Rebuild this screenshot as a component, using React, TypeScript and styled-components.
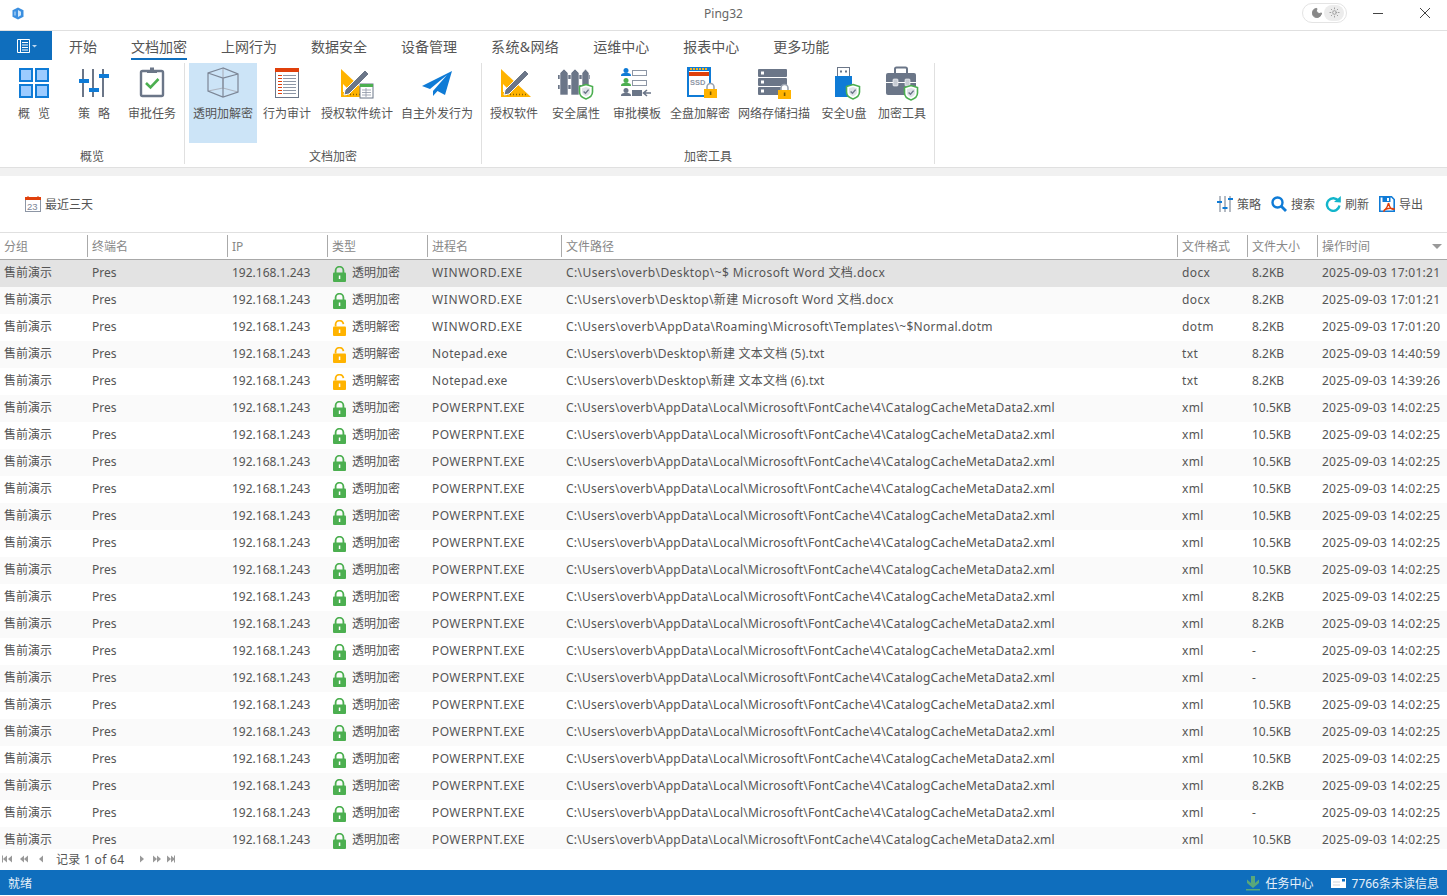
import type { ReactNode } from 'react';
import { Moon, Sun } from 'lucide-react';
import styled, { createGlobalStyle } from 'styled-components';

const BLUE = '#0f6ebd';
const ICON_BLUE = '#0f7bd6';
const SLATE = '#6b7688';
const GREEN = '#4caf50';
const AMBER = '#ffb300';
const RED = '#e0400b';
const COLUMNS = '87px 140px 100px 100px 134px 616px 70px 70px 1fr';

const GlobalStyle = createGlobalStyle`
  html, body {
    margin: 0;
    background: #fff;
  }
  body {
    font-family: "Noto Sans", "Noto Sans CJK SC", sans-serif;
    font-size: 12px;
    color: #555;
  }
`;

const Shield = ({ x, y }: { x: number; y: number }) => (
  <g transform={`translate(${x} ${y})`}>
    <path d="M7 0.5 L13.5 2.5 V8 C13.5 11.5 10.5 13.8 7 15 C3.5 13.8 .5 11.5 .5 8 V2.5 Z" fill="#fff" stroke={GREEN} strokeWidth="1.6" />
    <path d="M7 3 L11 4.2 V8 C11 10 9.2 11.5 7 12.4 C4.8 11.5 3 10 3 8 V4.2 Z" fill="#dfe3e8" />
    <path d="M4.6 7.4 L6.5 9.3 L9.6 5.6" fill="none" stroke={SLATE} strokeWidth="1.4" />
  </g>
);

const Padlock = ({ x, y }: { x: number; y: number }) => (
  <g transform={`translate(${x} ${y})`}>
    <path d="M3 7 V5 A3.5 3.5 0 0 1 10 5 V7" fill="#fff" stroke="#9aa3b0" strokeWidth="1.6" />
    <rect x="0" y="7" width="13" height="9" fill={AMBER} />
    <rect x="5.8" y="9.5" width="1.6" height="3.5" fill="#7a5a00" />
  </g>
);

const TrianglePencil = ({ x }: { x: number }) => (
  <g transform={`translate(${x} 0)`}>
    <path d="M5 4 L35 32 H5 Z" fill={AMBER} />
    <path d="M8 29.5 H30" stroke="#8a6400" strokeWidth="1.4" strokeDasharray="1 2" />
    <path d="M7 19 V27 H15 Z" fill="#fff" />
    <path d="M9 25 L29 5 L33 9 L13 29 L8 30 Z" fill={SLATE} stroke="#fff" strokeWidth="1" />
  </g>
);

const Overview = () => (
  <>
    {[4, 20].map(y =>
      [4, 20].map(x => <rect key={`${x}-${y}`} x={x} y={y} width="12" height="12" fill="#9ccbff" stroke={ICON_BLUE} strokeWidth="2" />),
    )}
  </>
);

const Sliders = () => (
  <>
    <path d="M7 4 V32 M17 4 V32 M27 4 V32" stroke={SLATE} strokeWidth="2" />
    <rect x="3" y="14" width="10" height="4" fill={ICON_BLUE} />
    <rect x="13" y="23" width="10" height="4" fill={ICON_BLUE} />
    <rect x="23" y="9" width="10" height="4" fill={ICON_BLUE} />
  </>
);

const Clipboard = () => (
  <>
    <rect x="7" y="6" width="22" height="25" rx="1.5" fill="#fff" stroke={SLATE} strokeWidth="2.4" />
    <path d="M13 8 V5 H16 V2.5 H20 V5 H23 V8 Z" fill={SLATE} />
    <path d="M12 18 L16.5 22.5 L24.5 14" fill="none" stroke={GREEN} strokeWidth="2.6" />
  </>
);

const Cube = () => (
  <g fill="none" strokeWidth="1.2">
    <path d="M18 3 V23 M3 26 L18 23 L33 27" stroke="#aeb5c0" />
    <path d="M18 3 L3 8 V26 L18 32 L33 27 V9 Z M3 8 L18 13 L33 9 M18 13 V32" stroke="#7c8696" />
  </g>
);

const AuditLog = () => (
  <>
    <rect x="6.5" y="3.5" width="23" height="29" fill="#fff" stroke={SLATE} />
    <rect x="6" y="3" width="24" height="4" fill={RED} />
    {[10, 13, 16, 19, 22, 25, 28].map(y => (
      <g key={y}>
        <rect x="9" y={y} width="4" height="1" fill={RED} />
        <rect x="14" y={y} width="13" height="1" fill="#8d96a5" />
      </g>
    ))}
  </>
);

const LicenseStats = () => (
  <>
    <TrianglePencil x={-3} />
    <rect x="21" y="19" width="13" height="14" fill="#fff" stroke={SLATE} />
    <rect x="21" y="19" width="13" height="3" fill={GREEN} />
    <path d="M23 25 H32 M23 27.5 H32 M23 30 H32 M27 23 V32" stroke="#8d96a5" strokeWidth=".8" />
  </>
);

const Plane = () => <path d="M33 6 L3 21 L11 24 L28 10 L14 26 V31 L18.5 26 L26 30 Z" fill={ICON_BLUE} />;

const Fence = () => (
  <>
    <path d="M0 10 H32 V14 H0 Z M0 20 H32 V24 H0 Z" fill={SLATE} />
    <path d="M2 8 L6 4 L10 8 V30 H2 Z M13 8 L17 4 L21 8 V30 H13 Z M24 8 L27.5 4 L31 8 V30 H24 Z" fill={SLATE} stroke="#fff" strokeWidth=".6" />
    <Shield x={21} y={19} />
  </>
);

const Approver = ({ y, color }: { y: number; color: string }) => (
  <>
    <circle cx="7" cy={y + 2.5} r="2.5" fill={color} />
    <path d={`M2 ${y + 8} C2 ${y + 5} 4 ${y + 5} 7 ${y + 5} C10 ${y + 5} 12 ${y + 5} 12 ${y + 8} Z`} fill={color} />
  </>
);

const Template = () => (
  <>
    <Approver y={3} color={ICON_BLUE} />
    <Approver y={13} color={GREEN} />
    <Approver y={23} color={SLATE} />
    <rect x="13.5" y="5.5" width="14" height="5" fill="#fff" stroke="#8d96a5" />
    <rect x="13.5" y="15.5" width="14" height="5" fill="#fff" stroke="#8d96a5" />
    <rect x="13" y="25" width="10" height="6" fill={SLATE} />
    <path d="M32 28 H24.5 M28 25 L24.5 28 L28 31" fill="none" stroke={SLATE} strokeWidth="1.6" />
  </>
);

const Ssd = () => (
  <>
    <rect x="5" y="2" width="24" height="30" fill={ICON_BLUE} />
    <rect x="7" y="6" width="20" height="24" fill="#fff" />
    <path d="M8 4 H26" stroke="#f5b51e" strokeWidth="2" strokeDasharray="2 1" />
    <rect x="7" y="7" width="20" height="4" fill={RED} />
    <text x="8" y="20" fontSize="7.5" fontWeight="700" fill="#8d96a5" fontFamily="'Liberation Sans', sans-serif">
      SSD
    </text>
    <Padlock x={22} y={17} />
  </>
);

const ServerRack = () => (
  <>
    {[4, 13, 22].map(y => (
      <g key={y}>
        <rect x="2" y={y} width="29" height="8" rx="1" fill={SLATE} />
        <rect x="5" y={y + 2.5} width="3" height="3" fill="#fff" />
      </g>
    ))}
    <Padlock x={22} y={18} />
  </>
);

const UsbDisk = () => (
  <>
    <rect x="11.5" y="2.5" width="12" height="9" fill="#fff" stroke={SLATE} />
    <path d="M14 5.5 H16 V7.5 H14 Z M19 5.5 H21 V7.5 H19 Z" fill={SLATE} />
    <rect x="9" y="11" width="17" height="21" fill={ICON_BLUE} />
    <Shield x={20} y={19} />
  </>
);

const Toolbox = () => (
  <>
    <path d="M11 8 V4 A1.5 1.5 0 0 1 12.5 2.5 H21.5 A1.5 1.5 0 0 1 23 4 V8" fill="none" stroke={SLATE} strokeWidth="2" />
    <rect x="2" y="8" width="30" height="22" rx="2" fill={SLATE} />
    <path d="M2 17.5 H32" stroke="#fff" />
    <rect x="9" y="14" width="5" height="7" rx="1" fill="#c7ccd4" stroke="#fff" strokeWidth=".6" />
    <rect x="21" y="14" width="5" height="7" rx="1" fill="#c7ccd4" stroke="#fff" strokeWidth=".6" />
    <Shield x={20} y={20} />
  </>
);

const SmallSliders = () => (
  <svg width="16" height="16" viewBox="0 0 16 16">
    <path d="M3 0 V16 M8 0 V16 M13 0 V16" stroke={SLATE} />
    <rect x="0" y="5" width="5" height="2" fill={ICON_BLUE} />
    <rect x="5.5" y="11" width="5" height="2" fill={ICON_BLUE} />
    <rect x="11" y="2" width="5" height="2" fill={ICON_BLUE} />
  </svg>
);

const SmallSearch = () => (
  <svg width="16" height="16" viewBox="0 0 16 16">
    <circle cx="6.5" cy="6.5" r="5" fill="none" stroke={ICON_BLUE} strokeWidth="2.4" />
    <path d="M10 10 L15 15" stroke={ICON_BLUE} strokeWidth="2.8" />
  </svg>
);

const SmallRefresh = () => (
  <svg width="16" height="16" viewBox="0 0 16 16">
    <path d="M13.5 5 A6.3 6.3 0 1 0 14.5 9.5" fill="none" stroke="#12b5cb" strokeWidth="2.4" />
    <path d="M9 6 L15.8 6.4 L15.8 0 Z" fill="#12b5cb" />
  </svg>
);

const SmallExport = () => (
  <svg width="16" height="16" viewBox="0 0 16 16">
    <path d="M.8 .8 H12.5 L15.2 3.5 V15.2 H.8 Z" fill="#fff" stroke={ICON_BLUE} strokeWidth="1.6" />
    <rect x="3.5" y="1" width="8" height="5" fill={ICON_BLUE} />
    <rect x="8" y="2" width="2" height="3" fill="#fff" />
    <path d="M9.5 7 C9 10 7 13 5 15 C5 13 10 11.5 15 13 C12 14 10.5 11 9.5 7 Z" fill="none" stroke={RED} strokeWidth="1.5" />
  </svg>
);

const SmallCalendar = () => (
  <svg width="16" height="16" viewBox="0 0 16 16">
    <rect x=".5" y="1.5" width="15" height="14" fill="#fff" stroke="#8d96a5" />
    <rect x="0" y="1" width="16" height="3" fill={RED} />
    <path d="M3 0 V2 M13 0 V2" stroke={RED} />
    <text x="2" y="14" fontSize="9.5" fill="#7c8696" fontFamily="'Liberation Sans', sans-serif">
      23
    </text>
  </svg>
);

const Lock = ({ open }: { open?: boolean }) => {
  const color = open ? AMBER : GREEN;
  return (
    <svg width="13" height="16" viewBox="0 0 13 16">
      <path d={open ? 'M2.6 6.5 V5 A3.9 3.9 0 0 1 10.4 4.2' : 'M2.6 7 V4.6 A3.9 3.9 0 0 1 10.4 4.6 V7'} fill="none" stroke={color} strokeWidth="1.8" />
      <rect x="0" y="6.5" width="13" height="9.5" rx="1" fill={color} />
      <rect x="5.8" y="9.5" width="1.5" height="3.5" fill="#fff" />
    </svg>
  );
};

interface RibbonEntry {
  label: string;
  width: number;
  icon: ReactNode;
  active?: boolean;
}

interface RibbonGroupData {
  title: string;
  width: number;
  inset: number;
  items: RibbonEntry[];
}

const ribbonGroups: RibbonGroupData[] = [
  {
    title: '概览',
    width: 185,
    inset: 4,
    items: [
      { label: '概 览', width: 60, icon: <Overview /> },
      { label: '策 略', width: 60, icon: <Sliders /> },
      { label: '审批任务', width: 56, icon: <Clipboard /> },
    ],
  },
  {
    title: '文档加密',
    width: 297,
    inset: 4,
    items: [
      { label: '透明加解密', width: 68, icon: <Cube />, active: true },
      { label: '行为审计', width: 60, icon: <AuditLog /> },
      { label: '授权软件统计', width: 80, icon: <LicenseStats /> },
      { label: '自主外发行为', width: 80, icon: <Plane /> },
    ],
  },
  {
    title: '加密工具',
    width: 453,
    inset: 1,
    items: [
      { label: '授权软件', width: 62, icon: <TrianglePencil x={0} /> },
      { label: '安全属性', width: 62, icon: <Fence /> },
      { label: '审批模板', width: 60, icon: <Template /> },
      { label: '全盘加解密', width: 66, icon: <Ssd /> },
      { label: '网络存储扫描', width: 82, icon: <ServerRack /> },
      { label: '安全U盘', width: 58, icon: <UsbDisk /> },
      { label: '加密工具', width: 58, icon: <Toolbox /> },
    ],
  },
];

const tabs = ['开始', '文档加密', '上网行为', '数据安全', '设备管理', '系统&网络', '运维中心', '报表中心', '更多功能'];
const headers = ['分组', '终端名', 'IP', '类型', '进程名', '文件路径', '文件格式', '文件大小', '操作时间'];

interface LogRow {
  decrypt?: boolean;
  process: string;
  processTrack: number;
  path: string;
  pathTrack: number;
  ext: string;
  size: string;
  time: string;
}

const FONT_CACHE_PATH = 'C:\\Users\\overb\\AppData\\Local\\Microsoft\\FontCache\\4\\CatalogCacheMetaData2.xml';
const pptSizes = ['10.5KB', '10.5KB', '10.5KB', '10.5KB', '10.5KB', '10.5KB', '10.5KB', '8.2KB', '8.2KB', '-', '-', '10.5KB', '10.5KB', '10.5KB', '8.2KB', '-', '10.5KB'];

const rows: LogRow[] = [
  { process: 'WINWORD.EXE', processTrack: 0.6, path: 'C:\\Users\\overb\\Desktop\\~$ Microsoft Word 文档.docx', pathTrack: 0.4, ext: 'docx', size: '8.2KB', time: '2025-09-03 17:01:21' },
  { process: 'WINWORD.EXE', processTrack: 0.6, path: 'C:\\Users\\overb\\Desktop\\新建 Microsoft Word 文档.docx', pathTrack: 0.36, ext: 'docx', size: '8.2KB', time: '2025-09-03 17:01:21' },
  { decrypt: true, process: 'WINWORD.EXE', processTrack: 0.6, path: 'C:\\Users\\overb\\AppData\\Roaming\\Microsoft\\Templates\\~$Normal.dotm', pathTrack: 0.32, ext: 'dotm', size: '8.2KB', time: '2025-09-03 17:01:20' },
  { decrypt: true, process: 'Notepad.exe', processTrack: 0.38, path: 'C:\\Users\\overb\\Desktop\\新建 文本文档 (5).txt', pathTrack: 0.225, ext: 'txt', size: '8.2KB', time: '2025-09-03 14:40:59' },
  { decrypt: true, process: 'Notepad.exe', processTrack: 0.38, path: 'C:\\Users\\overb\\Desktop\\新建 文本文档 (6).txt', pathTrack: 0.225, ext: 'txt', size: '8.2KB', time: '2025-09-03 14:39:26' },
  ...pptSizes.map(size => ({ process: 'POWERPNT.EXE', processTrack: 0.42, path: FONT_CACHE_PATH, pathTrack: 0.225, ext: 'xml', size, time: '2025-09-03 14:02:25' })),
];

const Pager = ({ marks, dir }: { marks: number[]; dir: 'left' | 'right' }) => (
  <svg width="11" height="8" viewBox="0 0 11 8">
    {marks.map(x =>
      x < 0 ? (
        <rect key={x} x={-x - 1} y="0.5" width="1" height="7" fill="#999" />
      ) : (
        <path key={x} d={dir === 'left' ? `M${x + 4} 0.5 V7.5 L${x} 4 Z` : `M${x} 0.5 V7.5 L${x + 4} 4 Z`} fill="#999" />
      ),
    )}
  </svg>
);

const App = () => (
  <Page>
    <GlobalStyle />
    <TitleBar>
      <AppLogo viewBox="0 0 12 13" width="12" height="13">
        <path d="M6 .5 L11.5 3.3 V9.7 L6 12.5 L.5 9.7 V3.3 Z" fill="#3b8fe0" />
        <path d="M6 3 L9 4.7 V8.3 L6 10 Z" fill="#cfe6fb" />
        <path d="M3 4.5 V8.5" stroke="#cfe6fb" />
      </AppLogo>
      <AppTitle>Ping32</AppTitle>
      <ThemeToggle>
        <Moon size={12} fill="#888" color="#888" />
        <SunBubble>
          <Sun size={11} color="#999" />
        </SunBubble>
      </ThemeToggle>
      <WindowButton viewBox="0 0 10 10">
        <path d="M0 5.5 H10" stroke="#444" />
      </WindowButton>
      <CloseButton viewBox="0 0 10 10">
        <path d="M0 0 L10 10 M10 0 L0 10" stroke="#444" />
      </CloseButton>
    </TitleBar>

    <TabBar>
      <FileButton>
        <svg width="20" height="14" viewBox="0 0 20 14">
          <path d="M.5 .5 H12.5 V13.5 H.5 Z M3.5 .5 V13.5 M5 3.5 H11 M5 6 H11 M5 8.5 H11 M5 11 H11" fill="none" stroke="#fff" />
          <path d="M15 6 H20 L17.5 8.5 Z" fill="#bcd7ef" />
        </svg>
      </FileButton>
      <TabList>
        {tabs.map(tab => (
          <Tab key={tab} $active={tab === '文档加密'} $tracked={tab.includes('&')}>
            {tab}
          </Tab>
        ))}
      </TabList>
    </TabBar>

    <Ribbon>
      {ribbonGroups.map(group => (
        <RibbonGroup key={group.title} $width={group.width}>
          <RibbonItems $inset={group.inset}>
            {group.items.map(item => (
              <RibbonItem key={item.label} $width={item.width} $active={item.active}>
                <svg width="36" height="36" viewBox="0 0 36 36">
                  {item.icon}
                </svg>
                <RibbonLabel>{item.label}</RibbonLabel>
              </RibbonItem>
            ))}
          </RibbonItems>
          <GroupTitle>{group.title}</GroupTitle>
        </RibbonGroup>
      ))}
    </Ribbon>
    <Strip />

    <Toolbar>
      <ToolAction>
        <SmallCalendar />
        最近三天
      </ToolAction>
      <ToolActions>
        <ToolAction>
          <SmallSliders />
          策略
        </ToolAction>
        <ToolAction>
          <SmallSearch />
          搜索
        </ToolAction>
        <ToolAction>
          <SmallRefresh />
          刷新
        </ToolAction>
        <ToolAction>
          <SmallExport />
          导出
        </ToolAction>
      </ToolActions>
    </Toolbar>

    <HeaderRow>
      {headers.map((header, index) => (
        <HeaderCell key={header} $first={index === 0}>
          {header}
        </HeaderCell>
      ))}
      <SortCaret />
    </HeaderRow>

    <TableBody>
      {rows.map((row, index) => (
        <Row key={index} $selected={index === 0} $odd={index % 2 === 1}>
          <Cell $first>售前演示</Cell>
          <Cell>Pres</Cell>
          <Cell>192.168.1.243</Cell>
          <TypeCell>
            <Lock open={row.decrypt} />
            <TypeLabel>{row.decrypt ? '透明解密' : '透明加密'}</TypeLabel>
          </TypeCell>
          <Cell $track={row.processTrack}>{row.process}</Cell>
          <Cell $track={row.pathTrack}>{row.path}</Cell>
          <Cell $track={0.4}>{row.ext}</Cell>
          <Cell>{row.size}</Cell>
          <Cell $track={0.26}>{row.time}</Cell>
        </Row>
      ))}
    </TableBody>

    <PagerBar>
      <PagerGroup $gap={6}>
        <Pager dir="left" marks={[-1, 1, 6]} />
        <Pager dir="left" marks={[1, 5]} />
        <Pager dir="left" marks={[3]} />
      </PagerGroup>
      <PagerText>记录 1 of 64</PagerText>
      <PagerGroup $gap={3}>
        <Pager dir="right" marks={[4]} />
        <Pager dir="right" marks={[3, 7]} />
        <Pager dir="right" marks={[3, 7, -11]} />
      </PagerGroup>
    </PagerBar>

    <StatusBar>
      就绪
      <StatusRight>
        <StatusItem>
          <svg width="16" height="16" viewBox="0 0 16 16">
            <path d="M6 1 H10 V8 L14 4.5 V8 L8 13 L2 8 V4.5 L6 8 Z M1 14 H15 V15.5 H1 Z" fill="#5aa77a" />
          </svg>
          任务中心
        </StatusItem>
        <StatusItem $gap={6}>
          <svg width="15" height="12" viewBox="0 0 15 12">
            <rect x="0" y="1" width="15" height="10" fill="#fff" />
            <rect x="11" y="2" width="3" height="2.5" fill={BLUE} />
            <path d="M2 5 H9 M2 8 H9" stroke="#cfd4da" />
          </svg>
          7766条未读信息
        </StatusItem>
      </StatusRight>
    </StatusBar>
  </Page>
);

export default App;

const Page = styled.div`
  display: flex;
  flex-direction: column;
  box-sizing: border-box;
  width: 1447px;
  height: 896px;
  padding-bottom: 1px;
  overflow: hidden;
  background: #fff;
`;

const TitleBar = styled.header`
  position: relative;
  display: flex;
  flex: none;
  align-items: center;
  box-sizing: border-box;
  height: 31px;
  padding-left: 12px;
  border-bottom: 1px solid #e0e0e0;
`;

const AppLogo = styled.svg`
  flex: none;
  margin-top: -4px;
`;

const AppTitle = styled.span`
  position: absolute;
  left: 0;
  right: 0;
  top: 5px;
  text-align: center;
  font-size: 12px;
  color: #666;
`;

const ThemeToggle = styled.div`
  display: flex;
  align-items: center;
  justify-content: space-between;
  box-sizing: border-box;
  width: 45px;
  height: 20px;
  margin: -5px 0 0 auto;
  padding: 0 2px 0 8px;
  border: 1px solid #e4e4e4;
  border-radius: 10px;
`;

const SunBubble = styled.span`
  display: flex;
  align-items: center;
  justify-content: center;
  width: 20px;
  height: 16px;
  border-radius: 8px;
  background: #ececec;
`;

const WindowButton = styled.svg`
  flex: none;
  width: 10px;
  height: 10px;
  margin: -5px 0 0 26px;
`;

const CloseButton = styled(WindowButton)`
  margin: -5px 17px 0 37px;
`;

const TabBar = styled.nav`
  display: flex;
  flex: none;
  height: 29px;
`;

const FileButton = styled.div`
  display: flex;
  align-items: center;
  justify-content: flex-end;
  width: 52px;
  padding-right: 15px;
  box-sizing: border-box;
  background: ${BLUE};
`;

const TabList = styled.div`
  display: flex;
  gap: 34px;
  padding-left: 17px;
`;

const Tab = styled.div<{ $active?: boolean; $tracked?: boolean }>`
  box-sizing: border-box;
  height: 29px;
  padding-top: 6px;
  font-size: 14px;
  line-height: 20px;
  letter-spacing: ${({ $tracked }) => ($tracked ? '0.4px' : '0')};
  color: #555;
  border-bottom: 2px solid ${({ $active }) => ($active ? BLUE : 'transparent')};
`;

const Ribbon = styled.section`
  display: flex;
  flex: none;
  box-sizing: border-box;
  height: 108px;
  padding-top: 3px;
  border-bottom: 1px solid #e0e0e0;
`;

const RibbonGroup = styled.div<{ $width: number }>`
  display: flex;
  flex-direction: column;
  box-sizing: border-box;
  width: ${({ $width }) => $width}px;
  height: 101px;
  border-right: 1px solid #e0e0e0;
`;

const RibbonItems = styled.div<{ $inset: number }>`
  display: flex;
  flex: none;
  height: 80px;
  padding-left: ${({ $inset }) => $inset}px;
`;

const RibbonItem = styled.div<{ $width: number; $active?: boolean }>`
  display: flex;
  flex-direction: column;
  align-items: center;
  flex: none;
  width: ${({ $width }) => $width}px;
  padding-top: 2px;
  background: ${({ $active }) => ($active ? '#cce4f7' : 'transparent')};
`;

const RibbonLabel = styled.span`
  margin-top: 5px;
  line-height: 16px;
  white-space: pre;
  word-spacing: 5px;
  color: #555;
`;

const GroupTitle = styled.div`
  margin-top: 6px;
  text-align: center;
  line-height: 16px;
  color: #555;
`;

const Strip = styled.div`
  flex: none;
  height: 8px;
  background: #f1f1f1;
`;

const Toolbar = styled.div`
  display: flex;
  flex: none;
  align-items: center;
  justify-content: space-between;
  box-sizing: border-box;
  height: 57px;
  padding: 0 24px;
  padding-left: 25px;
  border-bottom: 1px solid #e0e0e0;
`;

const ToolActions = styled.div`
  display: flex;
  gap: 10px;
`;

const ToolAction = styled.div`
  display: flex;
  align-items: center;
  gap: 4px;
  color: #555;
`;

const HeaderRow = styled.div`
  position: relative;
  display: grid;
  flex: none;
  grid-template-columns: ${COLUMNS};
  align-items: center;
  box-sizing: border-box;
  height: 27px;
  border-bottom: 1px solid #a8a8a8;
`;

const HeaderCell = styled.div<{ $first?: boolean }>`
  height: 22px;
  line-height: 24px;
  padding-left: 4px;
  border-left: ${({ $first }) => ($first ? 'none' : '1px solid #aaa')};
  color: #888;
`;

const SortCaret = styled.span`
  position: absolute;
  right: 5px;
  top: 11px;
  border-left: 5px solid transparent;
  border-right: 5px solid transparent;
  border-top: 5px solid #999;
`;

const TableBody = styled.div`
  flex: 1;
  min-height: 0;
  overflow: hidden;
`;

const Row = styled.div<{ $selected?: boolean; $odd?: boolean }>`
  display: grid;
  grid-template-columns: ${COLUMNS};
  align-items: center;
  height: 27px;
  background: ${({ $selected, $odd }) => ($selected ? '#e3e3e3' : $odd ? '#fafafa' : '#fff')};
`;

const Cell = styled.div<{ $first?: boolean; $track?: number }>`
  padding-left: ${({ $first }) => ($first ? 4 : 5)}px;
  padding-bottom: 1px;
  line-height: 16px;
  letter-spacing: ${({ $track }) => $track ?? 0}px;
  white-space: nowrap;
  overflow: hidden;
  color: #555;
`;

const TypeCell = styled(Cell)`
  display: flex;
  align-items: center;
  gap: 6px;
  padding-left: 6px;
  padding-bottom: 0;
`;

const TypeLabel = styled.span`
  display: block;
  padding-bottom: 1px;
`;

const PagerBar = styled.div`
  display: flex;
  flex: none;
  align-items: center;
  box-sizing: border-box;
  height: 21px;
  padding: 0 0 2px 2px;
`;

const PagerGroup = styled.div<{ $gap: number }>`
  display: flex;
  align-items: center;
  gap: ${({ $gap }) => $gap}px;
`;

const PagerText = styled.span`
  margin: 0 12px 0 9px;
  letter-spacing: 0.3px;
  color: #555;
`;

const StatusBar = styled.footer`
  display: flex;
  flex: none;
  align-items: center;
  justify-content: space-between;
  box-sizing: border-box;
  height: 25px;
  padding: 0 8px;
  background: ${BLUE};
  color: #e8f1f9;
`;

const StatusRight = styled.div`
  display: flex;
  gap: 17px;
`;

const StatusItem = styled.div<{ $gap?: number }>`
  display: flex;
  align-items: center;
  gap: ${({ $gap }) => $gap ?? 5}px;
`;
